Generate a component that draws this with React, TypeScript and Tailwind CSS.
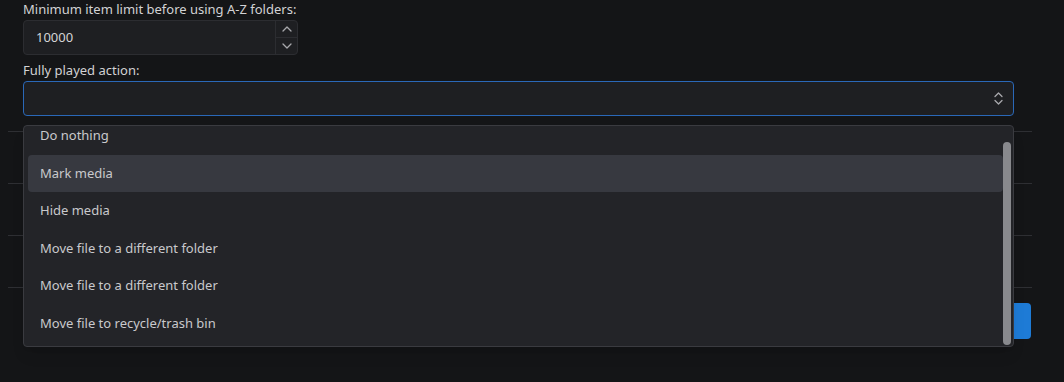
import React from "react";

const items = [
  "Do nothing",
  "Mark media",
  "Hide media",
  "Move file to a different folder",
  "Move file to a different folder",
  "Move file to recycle/trash bin",
];

function Chevron({ dir }: { dir: "up" | "down" }) {
  return (
    <svg width="10" height="6" viewBox="0 0 10 6" fill="none">
      <path
        d={dir === "up" ? "M1 5L5 1L9 5" : "M1 1L5 5L9 1"}
        stroke="#a8a8ac"
        strokeWidth="1.3"
        strokeLinecap="round"
        strokeLinejoin="round"
      />
    </svg>
  );
}

export default function App() {
  return (
    <div
      className="relative w-[1064px] h-[382px] overflow-hidden bg-[#141517] text-[#d2d2d4] text-[13px]"
      style={{ fontFamily: '"Noto Sans", "Open Sans", sans-serif' }}
    >
      <div className="pl-[23px] pr-[50px]">
        <div className="h-[18px] leading-[18px]">Minimum item limit before using A-Z folders:</div>
        <div className="mt-[2px] flex h-[35px] w-[275px] rounded-[4px] border border-[#2c2d31] bg-[#1e1f22]">
          <div className="flex flex-1 items-center pl-[12px] text-[#d4d4d6]">10000</div>
          <div className="flex w-[22px] flex-col border-l border-[#2c2d31]">
            <div className="flex flex-1 items-center justify-center border-b border-[#2c2d31]">
              <Chevron dir="up" />
            </div>
            <div className="flex flex-1 items-center justify-center">
              <Chevron dir="down" />
            </div>
          </div>
        </div>
        <div className="mt-[6px] h-[18px] leading-[18px]">Fully played action:</div>
        <div className="mt-[2px] flex h-[35px] items-center justify-end rounded-[4px] border border-[#2a68b8] bg-[#1e1f22] pr-[10px]">
          <svg width="9" height="13" viewBox="0 0 9 13" fill="none">
            <path d="M1 4.5L4.5 1L8 4.5" stroke="#a8a8ac" strokeWidth="1.3" strokeLinecap="round" strokeLinejoin="round" />
            <path d="M1 8.5L4.5 12L8 8.5" stroke="#a8a8ac" strokeWidth="1.3" strokeLinecap="round" strokeLinejoin="round" />
          </svg>
        </div>
      </div>

      <div className="ml-[8px] mr-[32px] mt-[15px]">
        <div className="h-[52px] border-t border-[#2e2f33]" />
        <div className="h-[52px] border-t border-[#2e2f33]" />
        <div className="h-[52px] border-t border-[#2e2f33]" />
        <div className="h-[16px] border-t border-[#2e2f33]" />
        <div className="flex justify-end pr-[1px]">
          <div className="h-[36px] w-[90px] rounded-[4px] bg-[#1e7bd6]" />
        </div>
      </div>

      <div className="absolute left-[23px] top-[125px] h-[222px] w-[991px] overflow-hidden rounded-[4px] border border-[#3a3b40] bg-[#232428] shadow-lg">
        <div className="-mt-[9px] pl-[4px] pr-[10px]">
          {items.map((t, i) => (
            <div
              key={i}
              className={
                "flex h-[37.6px] items-center rounded-[4px] pl-[12px] text-[#c9c9cc] " +
                (i === 1 ? "bg-[#373940]" : "")
              }
            >
              {t}
            </div>
          ))}
        </div>
        <div className="absolute right-[2px] top-[16px] h-[203px] w-[8px] rounded-full bg-[#88898d]" />
      </div>
    </div>
  );
}
